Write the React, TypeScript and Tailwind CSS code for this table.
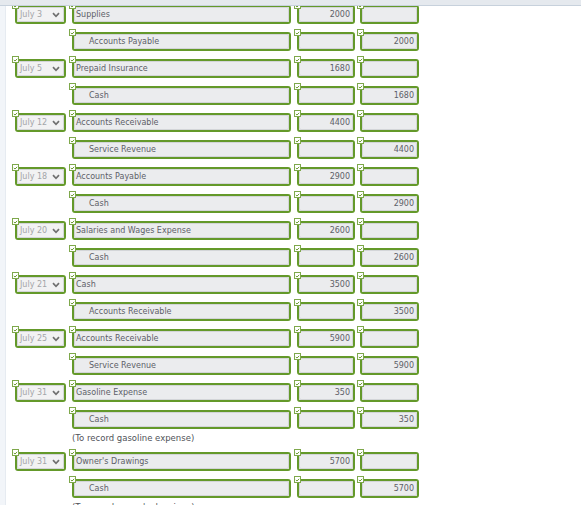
type Entry = {
  date: string;
  debit: string;
  credit: string;
  amount: string;
  note?: string;
};

const entries: Entry[] = [
  { date: "July 3", debit: "Supplies", credit: "Accounts Payable", amount: "2000" },
  { date: "July 5", debit: "Prepaid Insurance", credit: "Cash", amount: "1680" },
  { date: "July 12", debit: "Accounts Receivable", credit: "Service Revenue", amount: "4400" },
  { date: "July 18", debit: "Accounts Payable", credit: "Cash", amount: "2900" },
  { date: "July 20", debit: "Salaries and Wages Expense", credit: "Cash", amount: "2600" },
  { date: "July 21", debit: "Cash", credit: "Accounts Receivable", amount: "3500" },
  { date: "July 25", debit: "Accounts Receivable", credit: "Service Revenue", amount: "5900" },
  {
    date: "July 31",
    debit: "Gasoline Expense",
    credit: "Cash",
    amount: "350",
    note: "(To record gasoline expense)",
  },
  {
    date: "July 31",
    debit: "Owner's Drawings",
    credit: "Cash",
    amount: "5700",
    note: "(To record owner's drawings)",
  },
];

function Check() {
  return (
    <span className="absolute -left-[5px] -top-[5px] z-10 flex h-[7px] w-[7px] items-center justify-center border border-[#7ea84b] bg-white">
      <svg width="5" height="4" viewBox="0 0 5 4" className="block">
        <path d="M0.8 2 L2 3 L4.2 0.9" fill="none" stroke="#6a9a30" strokeWidth="1" />
      </svg>
    </span>
  );
}

function Field({
  width,
  text,
  align = "left",
  indent = false,
}: {
  width: string;
  text?: string;
  align?: "left" | "right";
  indent?: boolean;
}) {
  return (
    <div className={`relative h-[19px] shrink-0 rounded-[3px] border-2 border-[#64992a] ${width}`}>
      <Check />
      <div
        className={`flex h-full items-center rounded-[2px] border border-[#d3d5d8] bg-[#ebecee] text-[8px] text-[#5d6068] ${
          align === "right" ? "justify-end pr-[2px]" : indent ? "pl-[14px]" : "pl-[1px]"
        }`}
      >
        {text}
      </div>
    </div>
  );
}

function DateSelect({ value }: { value: string }) {
  return (
    <div className="relative h-[19px] w-[51px] shrink-0 rounded-[3px] border-2 border-[#64992a]">
      <Check />
      <div className="flex h-full items-center justify-between rounded-[2px] border border-[#d3d5d8] bg-[#f2f2f3] pl-[2px] pr-[3px] text-[8px] text-[#a3a5a8]">
        <span>{value}</span>
        <svg width="8" height="6" viewBox="0 0 8 6">
          <path d="M1 1.2 L4 4.3 L7 1.2" fill="none" stroke="#707070" strokeWidth="1.7" />
        </svg>
      </div>
    </div>
  );
}

function Line({
  date,
  account,
  debit,
  credit,
  indent,
}: {
  date?: string;
  account: string;
  debit?: string;
  credit?: string;
  indent?: boolean;
}) {
  return (
    <div className="flex pt-[8px]">
      {date ? <DateSelect value={date} /> : <div className="w-[51px] shrink-0" />}
      <div className="ml-[6px]">
        <Field width="w-[219px]" text={account} indent={indent} />
      </div>
      <div className="ml-[6px]">
        <Field width="w-[58px]" text={debit} align="right" />
      </div>
      <div className="ml-[5px]">
        <Field width="w-[59px]" text={credit} align="right" />
      </div>
    </div>
  );
}

export default function App() {
  return (
    <div
      className="flex h-[505px] overflow-hidden bg-white"
      style={{ fontFamily: '"DejaVu Sans", Verdana, sans-serif' }}
    >
      <div className="fixed left-0 right-0 top-0 z-20 h-[6px] border-b border-[#c7d1dc] bg-[#e5e9ee]" />
      <aside className="w-[6px] shrink-0 border-r border-[#e6ebf1] bg-[#f2f5f9]" />
      <main className="-mt-[3px] pl-[9px]">
        {entries.map((e, i) => (
          <div key={i}>
            <Line date={e.date} account={e.debit} debit={e.amount} />
            <Line account={e.credit} credit={e.amount} indent />
            {e.note && (
              <div className="h-[15px] pl-[57px] pt-[4px] text-[8.5px] leading-[11px] text-[#505359]">
                {e.note}
              </div>
            )}
          </div>
        ))}
      </main>
    </div>
  );
}
